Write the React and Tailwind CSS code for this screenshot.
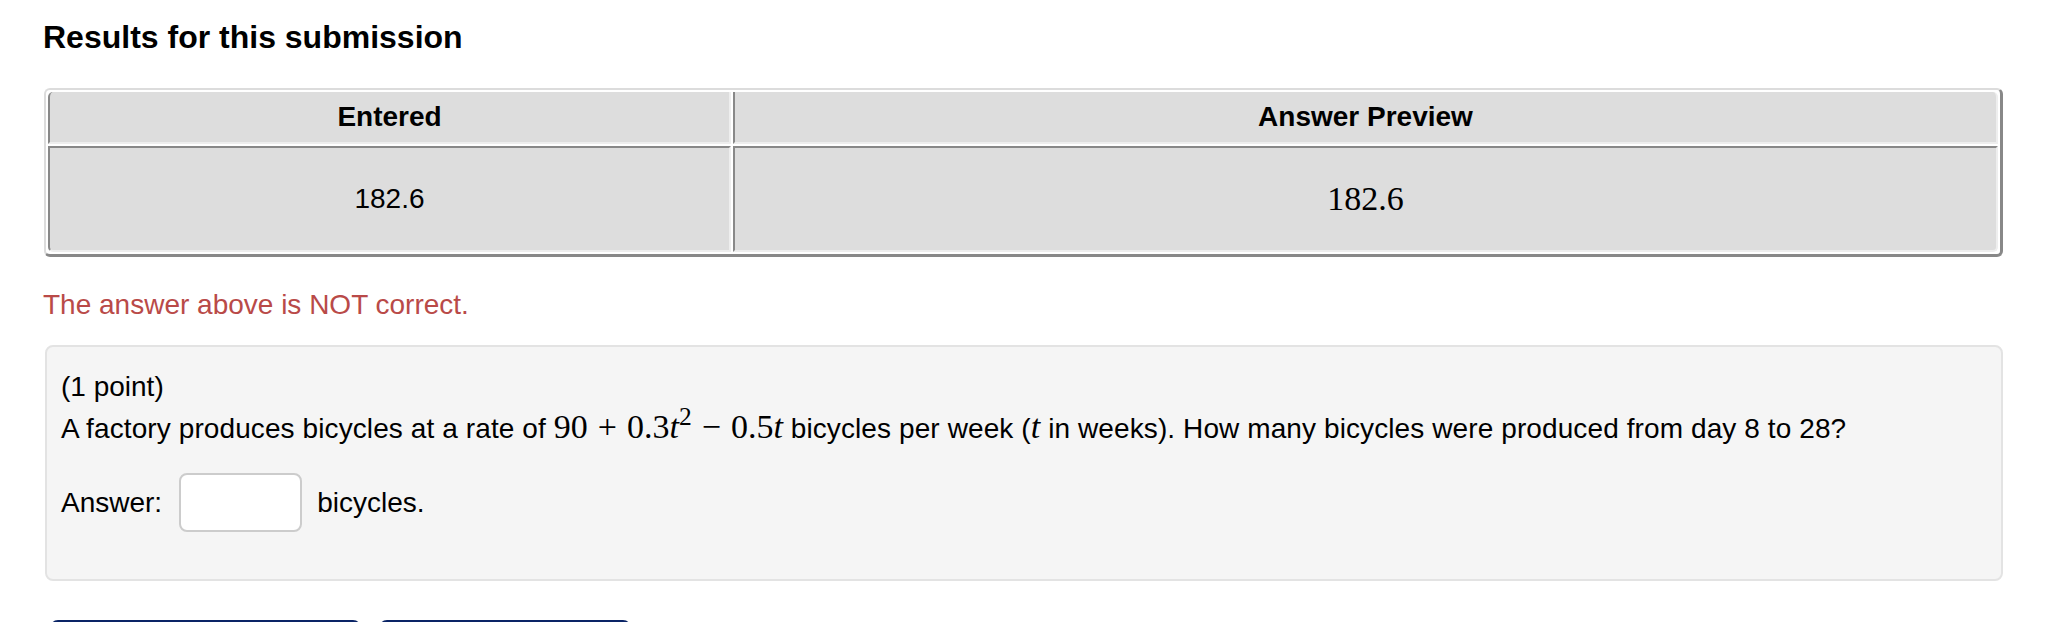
import React from 'react';

function MathT() {
    return <i className="font-['Liberation_Serif',serif] text-[34px]">t</i>;
}

export default function App() {
    return (
        <div className="min-h-screen bg-white pl-[43px] pr-[45px] font-['Liberation_Sans',Arial,sans-serif] text-[28px] leading-[40px] text-black">
            {/* Heading */}
            <h2 className="pt-[17px] text-[32px] font-bold leading-[40px]">Results for this submission</h2>

            {/* Results table */}
            <div className="mt-[31px] ml-[1px] rounded-[6px] border-2 border-t-[#dcdcdc] border-l-[#dcdcdc] border-r-[3px] border-b-[3px] border-r-[#888] border-b-[#888] bg-white">
                <table className="w-full border-separate border-spacing-[2px]">
                    <thead>
                        <tr>
                            <th className="h-[52px] w-[683px] rounded-tl-[5px] border-l-2 border-r-2 border-b-2 border-l-[#888] border-r-[#eeeeee] border-b-[#eeeeee] bg-[#dddddd] text-center align-middle font-bold">
                                Entered
                            </th>
                            <th className="h-[52px] rounded-tr-[5px] border-l-2 border-r-2 border-b-2 border-l-[#888] border-r-[#eeeeee] border-b-[#eeeeee] bg-[#dddddd] text-center align-middle font-bold">
                                Answer Preview
                            </th>
                        </tr>
                    </thead>
                    <tbody>
                        <tr>
                            <td className="h-[106px] rounded-bl-[5px] border-2 border-t-[#888] border-l-[#888] border-r-[#eeeeee] border-b-[#eeeeee] bg-[#dddddd] text-center align-middle">
                                182.6
                            </td>
                            <td className="h-[106px] rounded-br-[5px] border-2 border-t-[#888] border-l-[#888] border-r-[#eeeeee] border-b-[#eeeeee] bg-[#dddddd] text-center align-middle font-['Liberation_Serif',serif] text-[34px]">
                                182.6
                            </td>
                        </tr>
                    </tbody>
                </table>
            </div>

            {/* Feedback */}
            <p className="mt-[28px] text-[#b94a48]">The answer above is NOT correct.</p>

            {/* Problem well */}
            <div className="mt-[20px] ml-[2px] rounded-[8px] border-2 border-[#e3e3e3] bg-[#f5f5f5] pt-[20px] pb-[47px] pl-[14px] pr-[14px]">
                <p>(1 point)</p>
                <p className="tracking-[0.1px]">
                    A factory produces bicycles at a rate of{' '}
                    <span className="font-['Liberation_Serif',serif] text-[34px] tracking-normal">
                        90<span className="mx-[10px]">+</span>0.3<i>t</i>
                        <sup>2</sup>
                        <span className="mx-[10px]">−</span>0.5<i>t</i>
                    </span>{' '}
                    bicycles per week (<MathT /> in weeks). How many bicycles were produced from day 8 to 28?
                </p>
                <div className="mt-[24px] flex items-center">
                    <span>Answer:</span>
                    <input
                        type="text"
                        className="ml-[17px] h-[59px] w-[123px] rounded-[8px] border-2 border-[#cccccc] bg-white px-2 outline-none"
                    />
                    <span className="ml-[15px]">bicycles.</span>
                </div>
            </div>

            {/* Buttons (only their tops show in the frame) */}
            <div className="mt-[39px] flex gap-[18px] pl-[7px]">
                <button aria-label="Preview My Answers" className="h-[60px] w-[311px] rounded-[8px] bg-[#0a2466]" />
                <button aria-label="Submit Answers" className="h-[60px] w-[252px] rounded-[8px] bg-[#0a2466]" />
            </div>
        </div>
    );
}
